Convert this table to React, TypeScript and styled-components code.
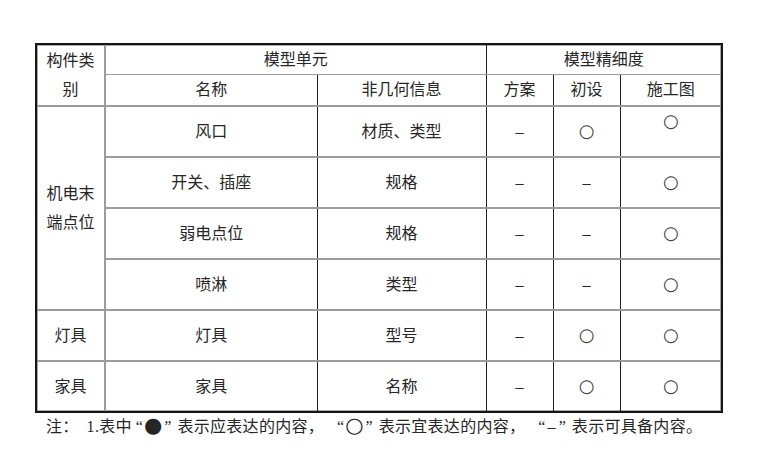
import React from 'react';
import styled, {createGlobalStyle, css} from 'styled-components';

const GlobalStyle = createGlobalStyle`
  body {
    margin: 0;
    background: #ffffff;
    font-family: "Liberation Serif", "Noto Sans CJK SC", serif;
    color: #262626;
  }
`

const colWidths = [68, 212, 169, 67, 67, 101]

type Level = '–' | '○'

const mepRows: { name: string; info: string; levels: Level[]; raised?: boolean }[] = [
    {name: '风口', info: '材质、类型', levels: ['–', '○', '○'], raised: true},
    {name: '开关、插座', info: '规格', levels: ['–', '–', '○']},
    {name: '弱电点位', info: '规格', levels: ['–', '–', '○']},
    {name: '喷淋', info: '类型', levels: ['–', '–', '○']},
]

const otherRows: { group: string; name: string; info: string; levels: Level[] }[] = [
    {group: '灯具', name: '灯具', info: '型号', levels: ['–', '○', '○']},
    {group: '家具', name: '家具', info: '名称', levels: ['–', '○', '○']},
]

const LevelMark = ({value}: { value: Level }) =>
    value === '○' ? <Circle>○</Circle> : <Dash>–</Dash>

const Quoted = ({mark, lead}: { mark: string; lead: number }) => (
    <>
        <QuoteMark $side="open" $lead={lead}>“</QuoteMark>
        {mark === '–' ? <NoteDash>–</NoteDash> : <NoteMark>{mark}</NoteMark>}
        <QuoteMark $side="close">”</QuoteMark>
    </>
)

export default function App() {
    return (
        <>
            <GlobalStyle/>
            <Page>
                <Frame>
                    <Table>
                        <colgroup>
                            {colWidths.map((w, i) => <col key={i} style={{width: w}}/>)}
                        </colgroup>
                        <tbody>
                        <tr>
                            <Cell rowSpan={2} $group $twoLine>构件类<br/>别</Cell>
                            <Cell colSpan={2} $h={29} $thinBottom>模型单元</Cell>
                            <Cell colSpan={3} $h={29} $thinBottom>模型精细度</Cell>
                        </tr>
                        <tr>
                            <Cell $h={30} $thinTop>名称</Cell>
                            <Cell $h={30} $thinTop>非几何信息</Cell>
                            <Cell $h={30} $thinTop>方案</Cell>
                            <Cell $h={30} $thinTop>初设</Cell>
                            <Cell $h={30} $thinTop>施工图</Cell>
                        </tr>
                        {mepRows.map((row, i) => (
                            <tr key={row.name}>
                                {i === 0 && <Cell rowSpan={4} $group $twoLine>机电末<br/>端点位</Cell>}
                                <Cell $h={49}>{row.name}</Cell>
                                <Cell $h={49}>{row.info}</Cell>
                                {row.levels.map((lv, j) => {
                                    const raised = row.raised && j === 2
                                    return (
                                        <Cell key={j} $h={raised ? 46 : 49} $raised={raised}>
                                            <LevelMark value={lv}/>
                                        </Cell>
                                    )
                                })}
                            </tr>
                        ))}
                        {otherRows.map(row => (
                            <tr key={row.group}>
                                <Cell $h={49} $group>{row.group}</Cell>
                                <Cell $h={49}>{row.name}</Cell>
                                <Cell $h={49}>{row.info}</Cell>
                                {row.levels.map((lv, j) => (
                                    <Cell key={j} $h={49}><LevelMark value={lv}/></Cell>
                                ))}
                            </tr>
                        ))}
                        </tbody>
                    </Table>
                </Frame>
                <Note>
                    注：<NoteIndex>1.</NoteIndex>表中<Quoted mark="●" lead={4}/>表示应表达的内容，<Quoted
                    mark="○" lead={13}/>表示宜表达的内容，<Quoted mark="–" lead={13}/>表示可具备内容。
                </Note>
            </Page>
        </>
    );
}

const Page = styled.div`
  width: 760px;
  height: 450px;
  box-sizing: border-box;
  padding: 43px 0 0 35px;
`

const Frame = styled.div`
  width: 688px;
  box-sizing: border-box;
  border: 2px solid #141414;
  box-shadow: inset 0 0 0 1px #a8a8a8;
`

const Table = styled.table`
  width: 684px;
  table-layout: fixed;
  border-collapse: collapse;
  border-style: hidden;
`

const Cell = styled.td<{ $h?: number; $group?: boolean; $twoLine?: boolean; $thinTop?: boolean; $thinBottom?: boolean; $raised?: boolean }>`
  padding: 0;
  text-align: center;
  vertical-align: middle;
  font-size: 16px;
  line-height: 22px;
  color: #262626;
  height: ${p => (p.$h ? `${p.$h}px` : 'auto')};
  border-top: 2px solid #9c9c9c;
  border-bottom: 2px solid #9c9c9c;
  border-left: 1px solid #1e1e1e;
  border-right: 1px solid #1e1e1e;

  ${p => p.$group && css`
    border-right: 2px solid #9c9c9c;
  `}

  ${p => p.$twoLine && css`
    line-height: 29px;
  `}

  ${p => p.$thinTop && css`
    border-top: 1px solid #9c9c9c;
  `}

  ${p => p.$thinBottom && css`
    border-bottom: 1px solid #9c9c9c;
  `}

  ${p => p.$raised && css`
    vertical-align: top;
    padding-top: 3px;
  `}
`

const Circle = styled.span`
  font-family: "DejaVu Sans", sans-serif;
  font-size: 18px;
  line-height: 22px;
  color: #3a3a3a;
`

const Dash = styled.span`
  font-family: "Liberation Serif", serif;
  font-size: 16px;
  color: #262626;
`

const Note = styled.p`
  margin: 3px 0 0 11px;
  font-size: 16px;
  line-height: 22px;
  letter-spacing: 0.3px;
  color: #262626;
  white-space: nowrap;
`

const NoteIndex = styled.span`
  padding-left: 8px;
`

const QuoteMark = styled.span<{ $side: 'open' | 'close'; $lead?: number }>`
  font-family: "Liberation Serif", serif;
  letter-spacing: 0;
  ${p => p.$side === 'open'
    ? css`padding-left: ${p.$lead ?? 5}px; padding-right: 1px;`
    : css`padding-left: 2px; padding-right: 6px;`}
`

const NoteMark = styled.span`
  font-family: "DejaVu Sans", sans-serif;
  font-size: 21px;
  line-height: 16px;
  letter-spacing: 0;
`

const NoteDash = styled.span`
  font-family: "Liberation Serif", serif;
  padding: 0 1px;
`
